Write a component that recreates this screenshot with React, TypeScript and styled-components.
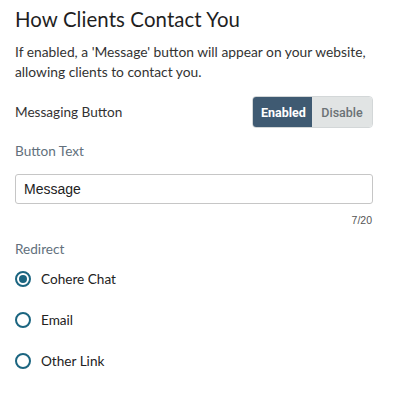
import React, { useState } from 'react';
import styled, { createGlobalStyle } from 'styled-components';

const GlobalStyle = createGlobalStyle`
  html, body {
    margin: 0;
    padding: 0;
    background: #ffffff;
  }
  body {
    font-family: Lato, "Noto Sans", sans-serif;
    color: #222;
  }
`

const accent = '#1b6580';

const Panel = styled.div`
  width: 358px;
  padding: 6px 15px 0 15px;
`

const Title = styled.h2`
  margin: 0;
  font-size: 20.4px;
  font-weight: 400;
  line-height: 26px;
  color: #1f1f1f;
  letter-spacing: 0.1px;
`

const Intro = styled.p`
  margin: 10px 0 0 0;
  font-size: 13.8px;
  line-height: 20px;
  color: #333;
`

const SettingRow = styled.div`
  display: flex;
  align-items: center;
  justify-content: space-between;
  margin-top: 14px;
`

const RowLabel = styled.span`
  font-size: 13.6px;
  color: #333;
`

const Toggle = styled.div`
  display: flex;
  height: 32px;
  border-radius: 4px;
  overflow: hidden;
  border: 1px solid #d3d7d8;
  box-sizing: border-box;
`

const ToggleOption = styled.button<{ $active: boolean }>`
  border: none;
  margin: 0;
  font-family: Roboto, "Liberation Sans", sans-serif;
  font-size: 12.5px;
  font-weight: ${p => (p.$active ? 700 : 500)};
  padding: 0 8px;
  cursor: pointer;
  background: ${p => (p.$active ? '#3f5a72' : '#e1e4e4')};
  color: ${p => (p.$active ? '#ffffff' : '#6b7276')};
  width: ${p => (p.$active ? '59px' : '60px')};
`

const FieldLabel = styled.div<{ $gap: number }>`
  font-size: 13.6px;
  color: #62707c;
  margin-top: ${p => p.$gap}px;
`

const TextInput = styled.input`
  display: block;
  width: 100%;
  box-sizing: border-box;
  height: 30px;
  margin-top: 15px;
  border: 1px solid #c6c6c6;
  border-radius: 3px;
  padding: 0 8px;
  font-family: "Liberation Sans", Arial, sans-serif;
  font-size: 14px;
  color: #222;
  outline: none;
`

const Counter = styled.div`
  text-align: right;
  font-family: "Liberation Sans", Arial, sans-serif;
  font-size: 10.5px;
  color: #555;
  margin-top: 10px;
  padding-right: 1px;
`

const RadioList = styled.div`
  display: flex;
  flex-direction: column;
  gap: 21px;
  margin-top: 12px;
`

const RadioRow = styled.label`
  display: flex;
  align-items: center;
  gap: 10px;
  font-size: 13.6px;
  color: #222;
  cursor: pointer;
  height: 20px;
`

const RadioCircle = styled.span<{ $checked: boolean }>`
  width: 16px;
  height: 16px;
  box-sizing: border-box;
  border: 2px solid ${accent};
  border-radius: 50%;
  display: flex;
  align-items: center;
  justify-content: center;

  &::after {
    content: '';
    width: 8px;
    height: 8px;
    border-radius: 50%;
    background: ${accent};
    display: ${p => (p.$checked ? 'block' : 'none')};
  }
`

const options = ['Cohere Chat', 'Email', 'Other Link'];

const App: React.FC = () => {
  const [enabled, setEnabled] = useState(true);
  const [text, setText] = useState('Message');
  const [redirect, setRedirect] = useState('Cohere Chat');

  return (
    <Panel>
      <GlobalStyle />
      <Title>How Clients Contact You</Title>
      <Intro>
        If enabled, a 'Message' button will appear on your website, allowing clients to contact you.
      </Intro>
      <SettingRow>
        <RowLabel>Messaging Button</RowLabel>
        <Toggle>
          <ToggleOption $active={enabled} onClick={() => setEnabled(true)}>Enabled</ToggleOption>
          <ToggleOption $active={!enabled} onClick={() => setEnabled(false)}>Disable</ToggleOption>
        </Toggle>
      </SettingRow>
      <FieldLabel $gap={15}>Button Text</FieldLabel>
      <TextInput value={text} maxLength={20} onChange={e => setText(e.target.value)} />
      <Counter>{text.length}/20</Counter>
      <FieldLabel $gap={15}>Redirect</FieldLabel>
      <RadioList>
        {options.map(opt => (
          <RadioRow key={opt} onClick={() => setRedirect(opt)}>
            <RadioCircle $checked={redirect === opt} />
            {opt}
          </RadioRow>
        ))}
      </RadioList>
    </Panel>
  );
}

export default App;
